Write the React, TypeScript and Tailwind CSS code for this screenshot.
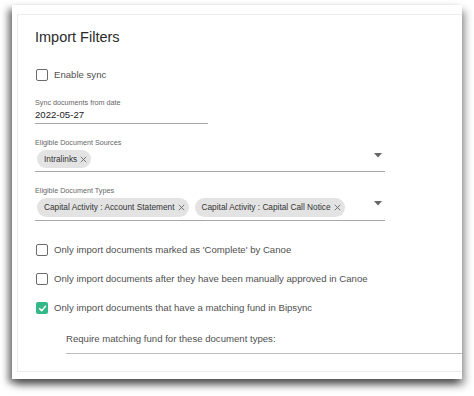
import React from 'react'

const font = { fontFamily: '"Liberation Sans", Arial, sans-serif' }

function Check({ checked, label }: { checked?: boolean; label: string }) {
  return (
    <div className="flex h-[14px] items-center gap-[6px] pl-[1px]">
      {checked ? (
        <span className="flex h-[12px] w-[12px] items-center justify-center rounded-[2px] bg-[#35b888]">
          <svg width="9" height="9" viewBox="0 0 10 10">
            <path d="M1.8 5.2 L4.1 7.4 L8.3 2.6" fill="none" stroke="white" strokeWidth="1.7" strokeLinecap="round" strokeLinejoin="round" />
          </svg>
        </span>
      ) : (
        <span className="h-[12px] w-[12px] rounded-[2px] border-[1.5px] border-[#6b6b6b]" />
      )}
      <span className="text-[9.6px] leading-[12px] text-[#505050]">{label}</span>
    </div>
  )
}

function Chip({ label }: { label: string }) {
  return (
    <span className="flex h-full items-center gap-[3px] rounded-full bg-[#e3e3e3] pl-[7px] pr-[4px] text-[8.3px] text-[#333]">
      {label}
      <svg width="7" height="7" viewBox="0 0 7 7">
        <path d="M0.8 0.8 L6.2 6.2 M6.2 0.8 L0.8 6.2" stroke="#666" strokeWidth="0.9" />
      </svg>
    </span>
  )
}

function Arrow() {
  return (
    <svg width="8" height="5" viewBox="0 0 8 5" className="mr-[3px] mt-[3px] shrink-0">
      <path d="M0 0 L8 0 L4 4.5 Z" fill="#666" />
    </svg>
  )
}

function ChipField({ label, chips, rowH }: { label: string; chips: string[]; rowH: string }) {
  return (
    <div className="w-[350px]">
      <div className="h-[10px] text-[7.2px] leading-[10px] text-[#666]">{label}</div>
      <div className="mt-[2px] flex items-start justify-between border-b border-[#a8a8a8] pb-[3px]">
        <div className={`ml-[2px] flex gap-[6px] ${rowH}`}>
          {chips.map((c) => (
            <Chip key={c} label={c} />
          ))}
        </div>
        <Arrow />
      </div>
    </div>
  )
}

export default function App() {
  return (
    <div className="h-[396px] w-[474px] overflow-hidden bg-white pl-[12px] pt-[5px]" style={font}>
      <div className="h-[374px] w-[450px] bg-white pb-[7px] pl-[5px] pt-[9px] shadow-[-4px_4px_7px_rgba(0,0,0,0.5),3px_6px_8px_rgba(0,0,0,0.4)]">
        <div className="h-full border-y border-l border-[#ececec] pl-[17px] pt-[12px]">
          <h1 className="h-[20px] text-[14.5px] leading-[20px] text-[#2b2b2b]">Import Filters</h1>

          <div className="mt-[21px]">
            <Check label="Enable sync" />
          </div>

          <div className="mt-[16px] w-[173px]">
            <div className="h-[10px] text-[7.2px] leading-[10px] text-[#666]">Sync documents from date</div>
            <div className="mt-[1px] h-[15px] border-b border-[#a8a8a8] text-[9.6px] leading-[12px] text-[#222]">
              2022-05-27
            </div>
          </div>

          <div className="mt-[14px]">
            <ChipField label="Eligible Document Sources" chips={['Intralinks']} rowH="h-[18px]" />
          </div>

          <div className="mt-[14px]">
            <ChipField
              label="Eligible Document Types"
              chips={['Capital Activity : Account Statement', 'Capital Activity : Capital Call Notice']}
              rowH="h-[19px]"
            />
          </div>

          <div className="mt-[22px] flex flex-col gap-[15px]">
            <Check label="Only import documents marked as 'Complete' by Canoe" />
            <Check label="Only import documents after they have been manually approved in Canoe" />
            <Check checked label="Only import documents that have a matching fund in Bipsync" />
          </div>

          <div className="ml-[31px] mt-[18px] border-b border-[#bdbdbd] pb-[8px] text-[9.6px] leading-[12px] text-[#505050]">
            Require matching fund for these document types:
          </div>
        </div>
      </div>
    </div>
  )
}
